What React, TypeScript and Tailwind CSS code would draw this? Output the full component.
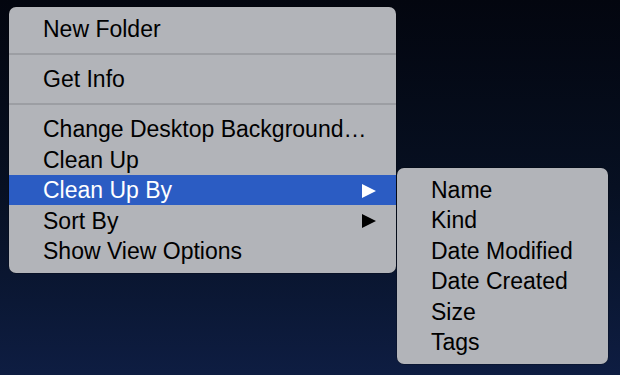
import React from "react";

function Arrow({ white }: { white?: boolean }) {
  return (
    <svg width="14" height="14" viewBox="0 0 14 14" className="shrink-0">
      <polygon points="0,0 14,7 0,14" fill={white ? "#ffffff" : "#000000"} />
    </svg>
  );
}

function Row({ label, active, arrow }: { label: string; active?: boolean; arrow?: boolean }) {
  return (
    <div
      className={
        "h-[30.5px] flex items-center justify-between pl-[34px] pr-[20px] pt-[1px] " +
        (active ? "bg-[#2b5cc3] text-white" : "text-black")
      }
    >
      <span>{label}</span>
      {arrow && <Arrow white={active} />}
    </div>
  );
}

function Sep() {
  return (
    <div className="h-[19.5px] flex items-center pb-[1px]">
      <div className="h-[2px] w-full bg-[#9c9ea3]" />
    </div>
  );
}

export default function App() {
  return (
    <div
      className="w-[620px] h-[375px] overflow-hidden bg-gradient-to-b from-[#03060f] via-[#071022] to-[#0e1d42] flex items-start pl-[9px] pt-[7px] text-[23px] leading-none"
      style={{ fontFamily: '"Liberation Sans", Arial, sans-serif' }}
    >
      <div className="w-[387px] rounded-[7px] bg-[#b2b4b9] py-[6.75px] shadow-[0_0_0_0.5px_rgba(0,0,0,0.4)]">
        <Row label="New Folder" />
        <Sep />
        <Row label="Get Info" />
        <Sep />
        <Row label="Change Desktop Background…" />
        <Row label="Clean Up" />
        <Row label="Clean Up By" active arrow />
        <Row label="Sort By" arrow />
        <Row label="Show View Options" />
      </div>
      <div className="mt-[161px] ml-[1px] w-[211px] rounded-[7px] bg-[#b2b4b9] py-[6.5px] shadow-[0_0_0_0.5px_rgba(0,0,0,0.4)]">
        <Row label="Name" />
        <Row label="Kind" />
        <Row label="Date Modified" />
        <Row label="Date Created" />
        <Row label="Size" />
        <Row label="Tags" />
      </div>
    </div>
  );
}
